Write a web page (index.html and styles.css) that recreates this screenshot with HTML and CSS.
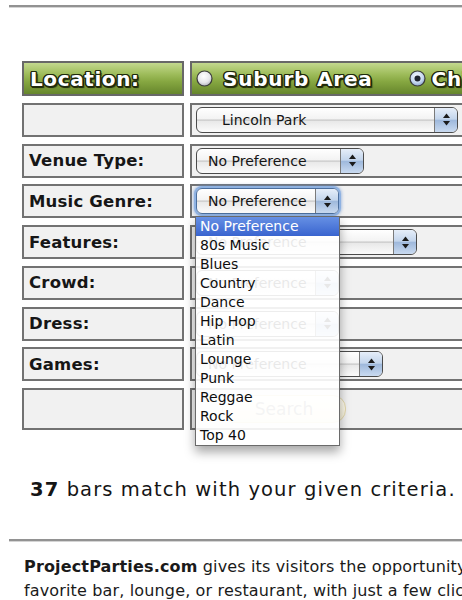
FILE: index.html
```html
<!DOCTYPE html>
<html>
<head>
<meta charset="utf-8">
<link rel="stylesheet" href="styles.css">
</head>
<body>
<div class="page">
  <div class="rule rule-top"></div>
  <div class="form">
    <div class="hdr hdr-label">Location:</div>
    <div class="hdr hdr-opts">
      <svg class="radio" width="17" height="17" viewBox="0 0 17 17"><defs><radialGradient id="rg" cx="45%" cy="35%" r="70%"><stop offset="0" stop-color="#ffffff"/><stop offset="0.6" stop-color="#e6e6ea"/><stop offset="1" stop-color="#a9aab4"/></radialGradient></defs><circle cx="8.5" cy="8.5" r="7.5" fill="url(#rg)" stroke="#3c3c3c" stroke-width="1.2"/></svg>
      <span class="opt">Suburb Area</span>
      <svg class="radio radio2" width="17" height="17" viewBox="0 0 17 17"><defs><radialGradient id="rb" cx="45%" cy="35%" r="70%"><stop offset="0" stop-color="#f4f8ff"/><stop offset="0.6" stop-color="#c6d8f0"/><stop offset="1" stop-color="#7f9cc6"/></radialGradient></defs><circle cx="8.5" cy="8.5" r="7.5" fill="url(#rb)" stroke="#3c3c3c" stroke-width="1.2"/><circle cx="8.5" cy="8.5" r="3" fill="#1e2430"/></svg>
      <span class="opt">Chicago Neighborhood</span>
    </div>

    <div class="cell"></div>
    <div class="cell val">
      <div class="sel w262"><span class="txt txt-indent">Lincoln Park</span><span class="arr"><svg width="9" height="15" viewBox="0 0 9 15"><polygon points="4.5,1.5 8,6 1,6" fill="#1b1b1b"/><polygon points="1,9 8,9 4.5,13.5" fill="#1b1b1b"/></svg></span></div>
    </div>

    <div class="cell lbl">Venue Type:</div>
    <div class="cell val">
      <div class="sel w168"><span class="txt">No Preference</span><span class="arr"><svg width="9" height="15" viewBox="0 0 9 15"><polygon points="4.5,1.5 8,6 1,6" fill="#1b1b1b"/><polygon points="1,9 8,9 4.5,13.5" fill="#1b1b1b"/></svg></span></div>
    </div>

    <div class="cell lbl">Music Genre:</div>
    <div class="cell val">
      <div class="sel w143 focus"><span class="txt">No Preference</span><span class="arr"><svg width="9" height="15" viewBox="0 0 9 15"><polygon points="4.5,1.5 8,6 1,6" fill="#1b1b1b"/><polygon points="1,9 8,9 4.5,13.5" fill="#1b1b1b"/></svg></span></div>
      <div class="menu">
        <div class="item on">No Preference</div>
        <div class="item">80s Music</div>
        <div class="item">Blues</div>
        <div class="item">Country</div>
        <div class="item">Dance</div>
        <div class="item">Hip Hop</div>
        <div class="item">Latin</div>
        <div class="item">Lounge</div>
        <div class="item">Punk</div>
        <div class="item">Reggae</div>
        <div class="item">Rock</div>
        <div class="item">Top 40</div>
      </div>
    </div>

    <div class="cell lbl">Features:</div>
    <div class="cell val">
      <div class="sel w221"><span class="txt">No Preference</span><span class="arr"><svg width="9" height="15" viewBox="0 0 9 15"><polygon points="4.5,1.5 8,6 1,6" fill="#1b1b1b"/><polygon points="1,9 8,9 4.5,13.5" fill="#1b1b1b"/></svg></span></div>
    </div>

    <div class="cell lbl">Crowd:</div>
    <div class="cell val">
      <div class="sel w143"><span class="txt">No Preference</span><span class="arr"><svg width="9" height="15" viewBox="0 0 9 15"><polygon points="4.5,1.5 8,6 1,6" fill="#1b1b1b"/><polygon points="1,9 8,9 4.5,13.5" fill="#1b1b1b"/></svg></span></div>
    </div>

    <div class="cell lbl">Dress:</div>
    <div class="cell val">
      <div class="sel w143"><span class="txt">No Preference</span><span class="arr"><svg width="9" height="15" viewBox="0 0 9 15"><polygon points="4.5,1.5 8,6 1,6" fill="#1b1b1b"/><polygon points="1,9 8,9 4.5,13.5" fill="#1b1b1b"/></svg></span></div>
    </div>

    <div class="cell lbl">Games:</div>
    <div class="cell val">
      <div class="sel w187"><span class="txt">No Preference</span><span class="arr"><svg width="9" height="15" viewBox="0 0 9 15"><polygon points="4.5,1.5 8,6 1,6" fill="#1b1b1b"/><polygon points="1,9 8,9 4.5,13.5" fill="#1b1b1b"/></svg></span></div>
    </div>

    <div class="cell"></div>
    <div class="cell val">
      <div class="btn">Search</div>
    </div>
  </div>

  <p class="count"><b>37</b> bars match with your given criteria.</p>
  <div class="rule rule-bottom"></div>
  <p class="about"><b>ProjectParties.com</b> gives its visitors the opportunity to find their<br>favorite bar, lounge, or restaurant, with just a few clicks.</p>
</div>
</body>
</html>
```

FILE: styles.css
```css
* { box-sizing: border-box; }
html, body { margin: 0; padding: 0; background: #ffffff; }
body {
  width: 462px;
  height: 600px;
  overflow: hidden;
  font-family: "DejaVu Sans", Verdana, sans-serif;
  color: #1a1a1a;
}
.page { width: 462px; overflow: hidden; }

.rule {
  height: 3px;
  margin-left: 9px;
  width: 460px;
  border-top: 2px solid #929292;
  border-bottom: 1px solid #d4d4d4;
}
.rule-top { margin-top: 5px; }
.rule-bottom { margin-top: 37px; }

.form {
  display: grid;
  grid-template-columns: 162px 300px;
  grid-template-rows: 35px repeat(7, 34px) 42px;
  column-gap: 6px;
  row-gap: 6.75px;
  margin: 53px 0 0 22px;
}

.hdr {
  border: 2px solid #686868;
  background: linear-gradient(#c3d88e 0%, #9fbd5c 35%, #86a741 60%, #66862c 100%);
  color: #ffffff;
  font-weight: bold;
  font-size: 20px;
  letter-spacing: 0.8px;
  display: flex;
  align-items: center;
  white-space: nowrap;
  overflow: hidden;
  text-shadow:
    1px 1px 0 #1f2a0b, -1px -1px 0 #1f2a0b, 1px -1px 0 #1f2a0b, -1px 1px 0 #1f2a0b,
    0 1.5px 0 #1f2a0b, 0 -1.5px 0 #1f2a0b, 1.5px 0 0 #1f2a0b, -1.5px 0 0 #1f2a0b,
    2px 2px 1px #26300f;
}
.hdr-label { padding-left: 6px; letter-spacing: 0.6px; }
.hdr-opts { padding-left: 4px; }
.radio { flex: none; margin-right: 10px; }
.radio2 { margin-left: 36px; margin-right: 6px; }

.cell {
  border: 2px solid #727272;
  background: #f1f1f1;
  display: flex;
  align-items: center;
  position: relative;
}
.lbl {
  padding-left: 5px;
  font-weight: bold;
  font-size: 16.5px;
  letter-spacing: 0.2px;
  color: #161616;
  white-space: nowrap;
}
.val { padding-left: 4px; }

.sel {
  flex: none;
  height: 26px;
  border: 1px solid #4b4b4b;
  border-radius: 6px;
  display: flex;
  align-items: center;
  overflow: hidden;
  background: linear-gradient(#ffffff 0%, #f3f3f3 46%, #c4c4c4 50%, #e9e9e9 56%, #fbfbfb 100%);
  font-size: 14px;
  color: #141414;
}
.sel .txt { flex: 1; padding-left: 11px; white-space: nowrap; overflow: hidden; }
.sel .txt-indent { padding-left: 25px; }
.sel .arr {
  flex: none;
  width: 23px;
  align-self: stretch;
  border-left: 1px solid #7a7a7a;
  background: linear-gradient(#e6eef9 0%, #c3d5ec 46%, #9fb9dc 52%, #c9daf0 100%);
  display: flex;
  align-items: center;
  justify-content: center;
}
.sel.focus {
  border-color: #4c6f9e;
  box-shadow: 0 0 0 2px #8fb2e2, 0 0 3px 3px rgba(110, 150, 210, 0.5);
}
.w262 { width: 262px; }
.w221 { width: 221px; }
.w187 { width: 187px; }
.w168 { width: 168px; }
.w143 { width: 143px; }

.btn {
  margin-left: 26px;
  width: 124px;
  height: 28px;
  border: 1px solid #e4d9ad;
  border-radius: 13px;
  background: linear-gradient(#fffdf4, #f5efd6);
  color: #8c8c8c;
  font-size: 17px;
  display: flex;
  align-items: center;
  justify-content: center;
}

.menu {
  position: absolute;
  left: 3px;
  top: 29.75px;
  width: 145px;
  border: 1px solid #6a6a6a;
  background: rgba(255, 255, 255, 0.9);
  box-shadow: 0 6px 10px rgba(0, 0, 0, 0.35);
  z-index: 5;
  font-size: 14px;
  color: #0e0e0e;
}
.item {
  height: 19px;
  line-height: 19px;
  padding-left: 4px;
  white-space: nowrap;
}
.item.on {
  background: linear-gradient(#6690e4, #3964cf);
  color: #ffffff;
}

.count {
  margin: 48px 0 0 30px;
  font-size: 19.5px;
  letter-spacing: 1.1px;
  line-height: 24px;
  white-space: nowrap;
  color: #151515;
}
.about {
  margin: 13px 0 0 24px;
  font-size: 16px;
  letter-spacing: 0.15px;
  line-height: 24px;
  white-space: nowrap;
  color: #1a1a1a;
}
```
